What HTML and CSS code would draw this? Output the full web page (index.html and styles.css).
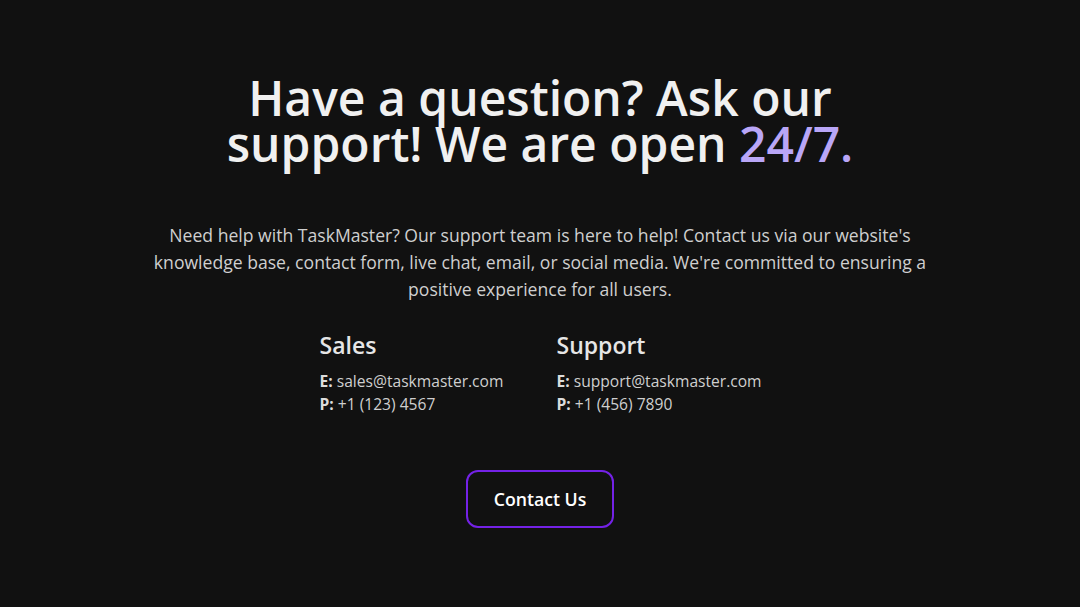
FILE: index.html
```html
<!DOCTYPE html>
<html lang="en">
<head>
<meta charset="utf-8">
<title>Support</title>
<link rel="stylesheet" href="styles.css">
</head>
<body>
<section class="support">
  <h1 class="title">Have a question? Ask our<br>support! We are open <span class="accent">24/7.</span></h1>
  <p class="lead">Need help with TaskMaster? Our support team is here to help! Contact us via our website's<br>knowledge base, contact form, live chat, email, or social media. We're committed to ensuring a<br>positive experience for all users.</p>
  <div class="contacts">
    <div class="contact">
      <h2 class="contact-title">Sales</h2>
      <p class="contact-line"><b>E:</b> sales@taskmaster.com</p>
      <p class="contact-line"><b>P:</b> +1 (123) 4567</p>
    </div>
    <div class="contact">
      <h2 class="contact-title">Support</h2>
      <p class="contact-line"><b>E:</b> support@taskmaster.com</p>
      <p class="contact-line"><b>P:</b> +1 (456) 7890</p>
    </div>
  </div>
  <a class="btn" href="#">Contact Us</a>
</section>
</body>
</html>
```
FILE: styles.css
```css
html, body {
  margin: 0;
  padding: 0;
  background: #111111;
  height: 100%;
}
body {
  font-family: "Open Sans", "DejaVu Sans", sans-serif;
  color: #f0f0f0;
}
.support {
  display: flex;
  flex-direction: column;
  align-items: center;
  padding-top: 75px;
}
.title {
  margin: 0;
  font-size: 48px;
  line-height: 46px;
  font-weight: 600;
  text-align: center;
  color: #f0f0f0;
}
.accent {
  color: #b9a6f7;
}
.lead {
  margin: 55px 0 0;
  font-size: 17.6px;
  line-height: 27px;
  text-align: center;
  color: #cfcfcf;
}
.contacts {
  display: grid;
  grid-template-columns: 237px 210px;
  margin-top: 27px;
  margin-left: 6px;
}
.contact-title {
  margin: 0 0 10px;
  font-size: 23px;
  line-height: 30px;
  font-weight: 600;
  color: #e6e6e6;
}
.contact-line {
  margin: 0;
  font-size: 15.6px;
  line-height: 23px;
  color: #cfcfcf;
}
.contact-line b {
  font-weight: 700;
  color: #dcdcdc;
}
.btn {
  margin-top: 54px;
  display: flex;
  align-items: center;
  justify-content: center;
  width: 144px;
  height: 54px;
  border: 2px solid #7422e6;
  border-radius: 12px;
  color: #ffffff;
  text-decoration: none;
  font-size: 17.7px;
  font-weight: 600;
}
```
